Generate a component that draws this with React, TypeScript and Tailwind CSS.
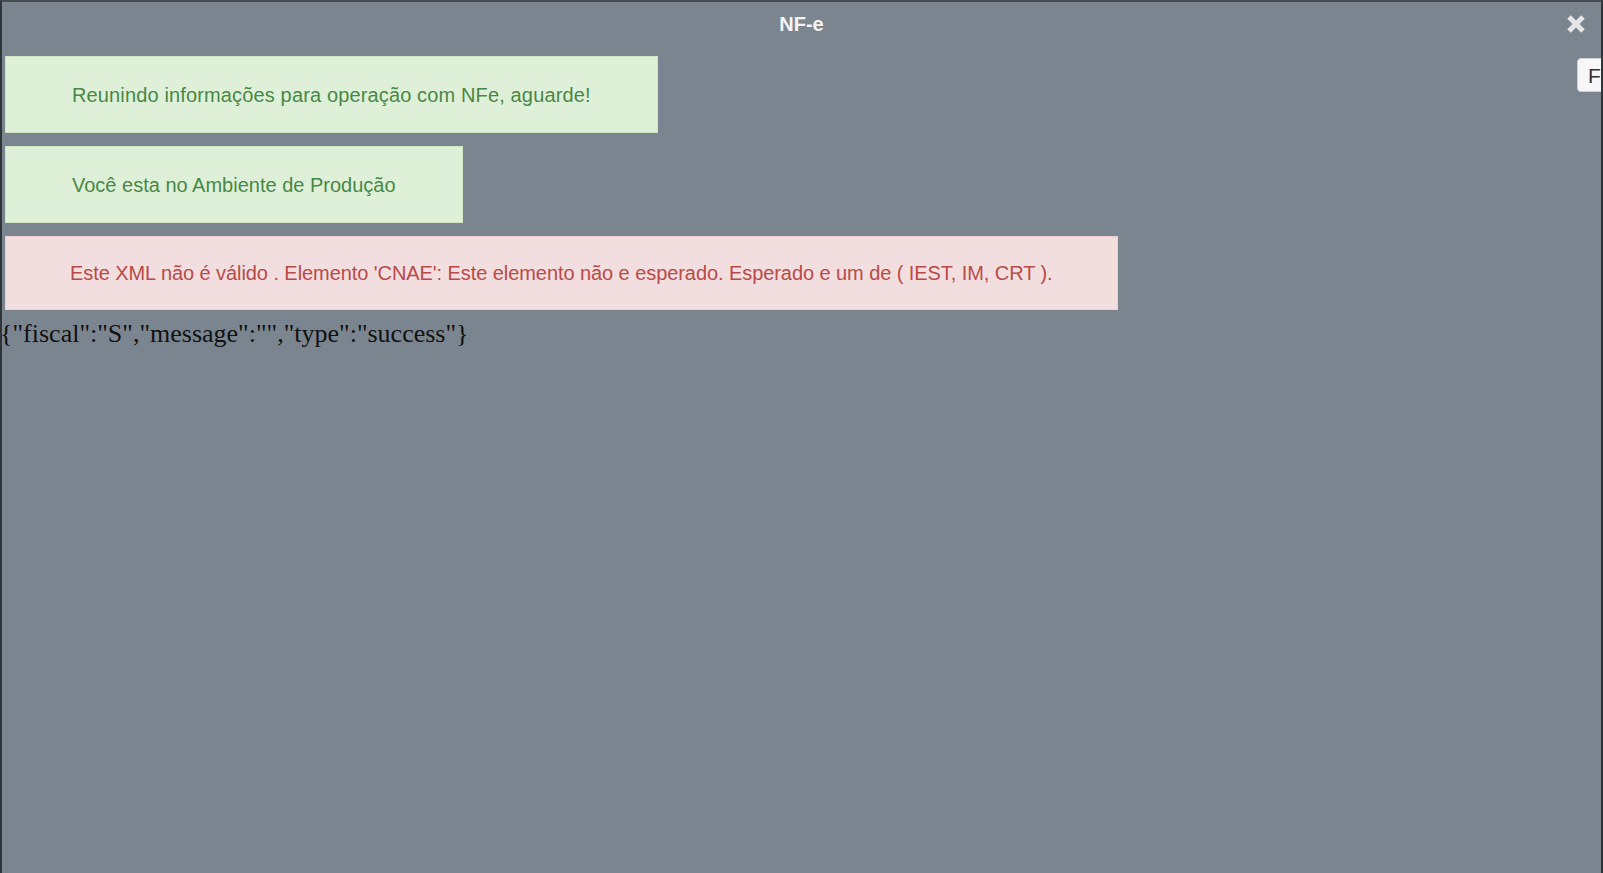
export default function App() {
  return (
    <div className="relative h-[873px] w-[1603px] overflow-hidden border-t-2 border-l-2 border-r-2 border-t-[#464b52] border-l-[#2f3439] border-r-[#2f3439] bg-[#7b8590] font-['Liberation_Sans',Arial,sans-serif]">
      <header className="flex h-[44px] items-center justify-center">
        <h1 className="text-[20px] font-bold text-[#f4f4f4]">NF-e</h1>
      </header>

      <button className="absolute right-[14px] top-[11px] flex h-[22px] w-[22px] items-center justify-center text-[#e6e6e6]">
        <svg viewBox="0 0 20 20" className="h-[20px] w-[20px]">
          <path d="M3 3 L17 17 M17 3 L3 17" stroke="currentColor" strokeWidth="5" strokeLinecap="butt" />
        </svg>
      </button>

      <button className="absolute left-[1575px] top-[56px] h-[34px] rounded-[4px] border border-[#cfd2d6] bg-[#f7f7f7] pl-[10px] pr-[12px] text-[21px] leading-none text-[#333]">
        Fechar
      </button>

      <div className="flex flex-col items-start gap-[13px] pl-[3px] pt-[10px]">
        <div className="flex h-[77px] items-center border border-[#d3e6c4] bg-[#dff0d8] px-[66px] text-[20px] tracking-[0.14px] text-[#488846]">
          Reunindo informações para operação com NFe, aguarde!
        </div>
        <div className="flex h-[77px] items-center border border-[#d3e6c4] bg-[#dff0d8] px-[66px] text-[20px] text-[#488846]">
          Você esta no Ambiente de Produção
        </div>
        <div className="flex h-[74px] items-center border border-[#ecd0d4] bg-[#f2dede] px-[64px] text-[20px] tracking-[-0.07px] text-[#b94a48]">
          Este XML não é válido . Elemento 'CNAE': Este elemento não e esperado. Esperado e um de ( IEST, IM, CRT ).
        </div>
      </div>

      <p className="-ml-[2px] mt-[9px] font-['Liberation_Serif','Times_New_Roman',serif] text-[26px] leading-[30px] text-[#111]">
        {'{"fiscal":"S","message":"","type":"success"}'}
      </p>
    </div>
  )
}
